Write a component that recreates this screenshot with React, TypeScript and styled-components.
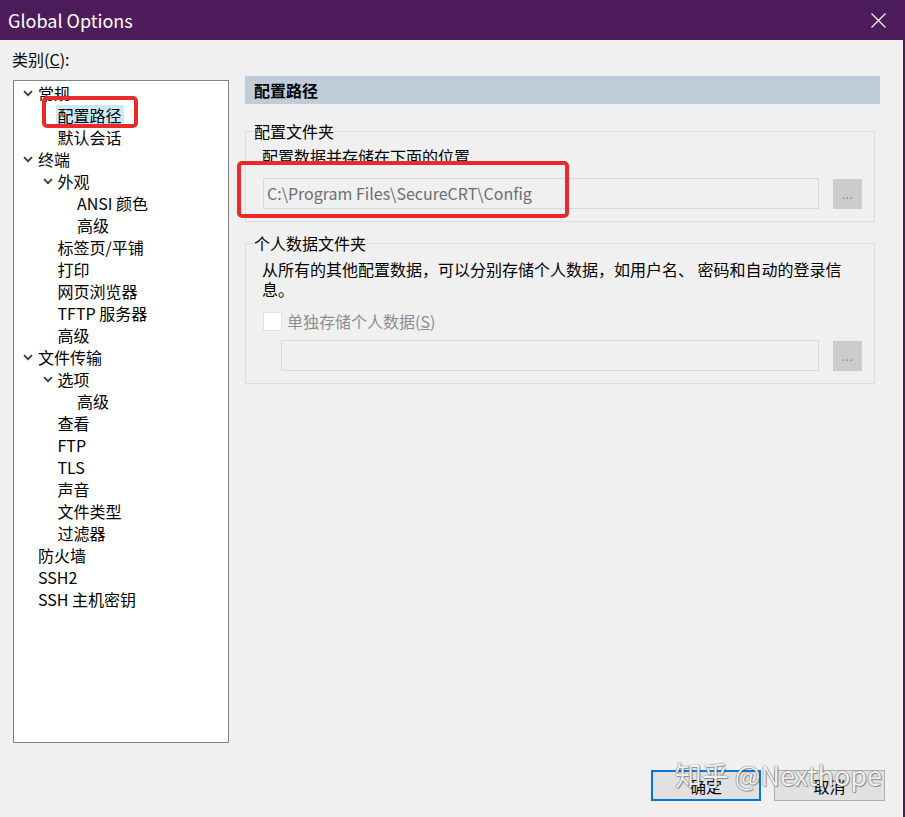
import React from "react";
import styled, { createGlobalStyle } from "styled-components";

const GlobalStyle = createGlobalStyle`
  html, body {
    margin: 0;
    padding: 0;
    background: #f0f0f0;
  }

  body {
    font-family: "Noto Sans CJK SC", "Noto Sans", sans-serif;
    font-size: 16px;
    color: #000;
  }
`;

const Window = styled.div`
  position: relative;
  width: 905px;
  height: 817px;
  box-sizing: border-box;
  display: flex;
  flex-direction: column;
  background: #f0f0f0;
  border-right: 2px solid #4e1c5b;
  overflow: hidden;
`;

const TitleBar = styled.header`
  height: 40px;
  flex: none;
  display: flex;
  align-items: center;
  justify-content: space-between;
  padding: 0 17px 0 8px;
  background: #4e1c5b;
  color: #fff;
  font-size: 18px;
  line-height: 40px;
`;

const Body = styled.div`
  flex: 1;
  display: flex;
  flex-direction: column;
`;

const Main = styled.div`
  display: flex;
  align-items: flex-start;
`;

const LeftCol = styled.div`
  margin-left: 13px;
  width: 216px;
`;

const CategoryLabel = styled.div`
  margin-top: 9px;
  margin-left: -1px;
  line-height: 20px;
`;

const Tree = styled.div`
  margin-top: 11px;
  height: 663px;
  box-sizing: border-box;
  border: 1px solid #828282;
  background: #fff;
  padding-top: 1px;
`;

const Row = styled.div<{ $level: number }>`
  height: 22px;
  display: flex;
  align-items: center;
  padding-left: ${(p) => 4 + p.$level * 19.5}px;
  white-space: nowrap;
`;

const Toggle = styled.span`
  width: 20px;
  flex: none;
  display: flex;
  align-items: center;
  justify-content: center;
  padding-top: 1px;
`;

const Label = styled.span<{ $selected?: boolean }>`
  line-height: 20px;
  padding: 0 2px;
  margin-left: -2px;
  background: ${(p) => (p.$selected ? "#cce8ff" : "transparent")};
`;

const RightCol = styled.div`
  margin-left: 16px;
  margin-top: 36px;
  width: 635px;
`;

const PageHeader = styled.div`
  height: 28px;
  line-height: 28px;
  padding-left: 9px;
  background: #bfcddb;
  font-weight: bold;
`;

const Group = styled.fieldset<{ $gap: number }>`
  width: 630px;
  box-sizing: border-box;
  margin: ${(p) => p.$gap}px 0 0;
  padding: 0 12px 12px 16px;
  border: 1px solid #dcdcdc;
  min-width: 0;
`;

const Legend = styled.legend`
  padding: 0 1px;
  margin-left: -9px;
  line-height: 20px;
`;

const Text = styled.p<{ $top: number }>`
  margin: ${(p) => p.$top}px 0 0;
  line-height: 20px;
`;

const PathRow = styled.div<{ $top: number; $indent: number }>`
  display: flex;
  align-items: center;
  gap: 14px;
  margin-top: ${(p) => p.$top}px;
  margin-left: ${(p) => p.$indent}px;
`;

const PathInput = styled.div`
  flex: 1;
  height: 31px;
  box-sizing: border-box;
  border: 1px solid #d9d9d9;
  background: #f0f0f0;
  color: #6d6d6d;
  padding-left: 3px;
  line-height: 29px;
  white-space: nowrap;
`;

const Browse = styled.div`
  width: 29px;
  height: 30px;
  flex: none;
  background: #cccccc;
  color: #8c8c8c;
  font-size: 12px;
  line-height: 30px;
  text-align: center;
  letter-spacing: 0.5px;
`;

const CheckRow = styled.label`
  display: flex;
  align-items: center;
  margin-top: 12px;
  margin-left: 1px;
  height: 20px;
  color: #8d8d8d;
`;

const CheckBox = styled.span`
  width: 17px;
  height: 17px;
  border: 1px solid #e0e0e0;
  background: #fff;
  margin-right: 5px;
`;

const Footer = styled.div`
  display: flex;
  justify-content: flex-end;
  gap: 13px;
  margin-top: 27px;
  padding-right: 18px;
`;

const DialogButton = styled.button<{ $default?: boolean }>`
  width: ${(p) => (p.$default ? 110 : 111)}px;
  height: 31px;
  box-sizing: border-box;
  background: #e1e1e1;
  border: ${(p) => (p.$default ? "2px solid #0078d7" : "1px solid #adadad")};
  font-family: inherit;
  font-size: 16px;
  color: #000;
  padding: 0;
`;

const Mark = styled.div<{ $left: number; $top: number; $w: number; $h: number }>`
  position: absolute;
  left: ${(p) => p.$left}px;
  top: ${(p) => p.$top}px;
  width: ${(p) => p.$w}px;
  height: ${(p) => p.$h}px;
  box-sizing: border-box;
  border: 4px solid #e82a2c;
  border-radius: 5px;
  pointer-events: none;
`;

const Watermark = styled.div`
  position: absolute;
  right: 21px;
  top: 756px;
  font-size: 27px;
  line-height: 38px;
  color: rgba(255, 255, 255, 0.92);
  text-shadow: 0 0 1px #6a6a6a, 0 0 1px #6a6a6a, 1px 1px 1px rgba(0, 0, 0, 0.35);
  white-space: nowrap;
  pointer-events: none;
`;

type Node = { label: React.ReactNode; level: number; open?: boolean; selected?: boolean };

const nodes: Node[] = [
  { label: "常规", level: 0, open: true },
  { label: "配置路径", level: 1, selected: true },
  { label: "默认会话", level: 1 },
  { label: "终端", level: 0, open: true },
  { label: "外观", level: 1, open: true },
  { label: "ANSI 颜色", level: 2 },
  { label: "高级", level: 2 },
  { label: "标签页/平铺", level: 1 },
  { label: "打印", level: 1 },
  { label: "网页浏览器", level: 1 },
  { label: "TFTP 服务器", level: 1 },
  { label: "高级", level: 1 },
  { label: "文件传输", level: 0, open: true },
  { label: "选项", level: 1, open: true },
  { label: "高级", level: 2 },
  { label: "查看", level: 1 },
  { label: "FTP", level: 1 },
  { label: "TLS", level: 1 },
  { label: "声音", level: 1 },
  { label: "文件类型", level: 1 },
  { label: "过滤器", level: 1 },
  { label: "防火墙", level: 0 },
  { label: "SSH2", level: 0 },
  { label: "SSH 主机密钥", level: 0 },
];

function Chevron() {
  return (
    <svg width="10" height="7" viewBox="0 0 10 7">
      <path d="M1 1.2 L5 5.2 L9 1.2" fill="none" stroke="#3a3a3a" strokeWidth="1.8" />
    </svg>
  );
}

function App() {
  return (
    <Window>
      <GlobalStyle />
      <TitleBar>
        <span>Global Options</span>
        <svg width="15" height="15" viewBox="0 0 15 15">
          <path d="M0.5 0.5 L14.5 14.5 M14.5 0.5 L0.5 14.5" stroke="#fff" strokeWidth="1.2" />
        </svg>
      </TitleBar>

      <Body>
        <Main>
          <LeftCol>
            <CategoryLabel>
              类别(<u>C</u>):
            </CategoryLabel>
            <Tree>
              {nodes.map((n, i) => (
                <Row key={i} $level={n.level}>
                  <Toggle>{n.open && <Chevron />}</Toggle>
                  <Label $selected={n.selected}>{n.label}</Label>
                </Row>
              ))}
            </Tree>
          </LeftCol>

          <RightCol>
            <PageHeader>配置路径</PageHeader>

            <Group $gap={17}>
              <Legend>配置文件夹</Legend>
              <Text $top={5}>配置数据并存储在下面的位置</Text>
              <PathRow $top={12} $indent={1}>
                <PathInput>C:\Program Files\SecureCRT\Config</PathInput>
                <Browse>...</Browse>
              </PathRow>
            </Group>

            <Group $gap={11}>
              <Legend>个人数据文件夹</Legend>
              <Text $top={6}>
                从所有的其他配置数据，可以分别存储个人数据，如用户名、&nbsp;密码和自动的登录信
                <br />
                息。
              </Text>
              <CheckRow>
                <CheckBox />
                单独存储个人数据(<u>S</u>)
              </CheckRow>
              <PathRow $top={9} $indent={19}>
                <PathInput />
                <Browse>...</Browse>
              </PathRow>
            </Group>
          </RightCol>
        </Main>

        <Footer>
          <DialogButton $default>确定</DialogButton>
          <DialogButton>取消</DialogButton>
        </Footer>
      </Body>

      <Mark $left={42} $top={96} $w={96} $h={32} />
      <Mark $left={237} $top={161} $w={332} $h={57} />
      <Watermark>知乎 @Nexthope</Watermark>
    </Window>
  );
}

export default App;
